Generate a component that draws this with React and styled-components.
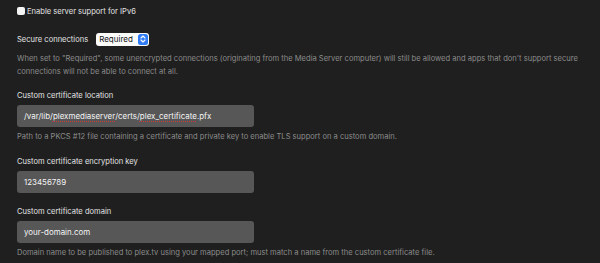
import React from "react";
import styled, { createGlobalStyle } from "styled-components";

const GlobalStyle = createGlobalStyle`
  html, body {
    margin: 0;
    padding: 0;
    background: #1f1f1f;
  }
  body {
    font-family: Inter, "Noto Sans", "Liberation Sans", sans-serif;
    -webkit-font-smoothing: antialiased;
  }
`;

const Page = styled.div`
  width: 600px;
  height: 263px;
  box-sizing: border-box;
  padding: 4px 17px 0;
  background: #1f1f1f;
  overflow: hidden;
`;

const CheckRow = styled.label`
  display: flex;
  align-items: center;
  gap: 2px;
  height: 14px;
  color: #e4e4e4;
  font-size: 7.57px;
`;

const CheckBox = styled.span`
  width: 8px;
  height: 8px;
  border-radius: 2px;
  background: #f4f4f4;
`;

const SelectRow = styled.div`
  display: flex;
  align-items: center;
  gap: 8px;
  height: 14px;
  margin-top: 14px;
  color: #e4e4e4;
  font-size: 7.57px;
`;

const Select = styled.div`
  display: flex;
  align-items: center;
  justify-content: space-between;
  width: 53px;
  height: 13px;
  box-sizing: border-box;
  padding: 0 1px 0 3px;
  border-radius: 3px;
  background: #fbfbfb;
  color: #111;
  font-size: 8px;
`;

const Stepper = styled.span`
  display: flex;
  align-items: center;
  justify-content: center;
  width: 10px;
  height: 11px;
  border-radius: 2.5px;
  background: #2f7cf6;
`;

const Description = styled.p`
  margin: ${(p) => p.$top || 3}px 0 0;
  color: #8b8b8b;
  font-size: 7.57px;
  line-height: 13px;
  white-space: nowrap;
`;

const Fields = styled.div`
  display: flex;
  flex-direction: column;
  gap: 13px;
  margin-top: 12px;
`;

const Group = styled.div`
  display: flex;
  flex-direction: column;
`;

const Label = styled.div`
  color: #e4e4e4;
  font-size: 7.57px;
  line-height: 12px;
`;

const Field = styled.div`
  display: flex;
  align-items: center;
  width: 237px;
  height: 22px;
  margin-top: 3px;
  box-sizing: border-box;
  padding: 0 7px;
  border-radius: 3px;
  background: #575757;
  color: #f4f4f4;
  font-size: 7.95px;
  white-space: nowrap;
`;

const Misspelled = styled.span`
  text-decoration: underline dotted #d03a3a;
  text-decoration-thickness: 1px;
  text-underline-offset: 2px;
`;

function StepperIcon() {
  return (
    <svg width="6" height="8" viewBox="0 0 6 8" fill="none">
      <path d="M1 3 L3 1 L5 3" stroke="#fff" strokeWidth="1.1" strokeLinecap="round" strokeLinejoin="round" />
      <path d="M1 5 L3 7 L5 5" stroke="#fff" strokeWidth="1.1" strokeLinecap="round" strokeLinejoin="round" />
    </svg>
  );
}

export default function App() {
  return (
    <>
      <GlobalStyle />
      <Page>
        <CheckRow>
          <CheckBox />
          Enable server support for IPv6
        </CheckRow>

        <SelectRow>
          Secure connections
          <Select>
            Required
            <Stepper>
              <StepperIcon />
            </Stepper>
          </Select>
        </SelectRow>
        <Description $top={5.5}>
          When set to "Required", some unencrypted connections (originating from the Media Server computer) will still be allowed and apps that don't support secure
          <br />
          connections will not be able to connect at all.
        </Description>

        <Fields>
          <Group>
            <Label>Custom certificate location</Label>
            <Field>
              /var/lib/<Misspelled>plexmediaserver</Misspelled>/certs/<Misspelled>plex_certificate</Misspelled>.pfx
            </Field>
            <Description>
              Path to a PKCS #12 file containing a certificate and private key to enable TLS support on a custom domain.
            </Description>
          </Group>

          <Group>
            <Label>Custom certificate encryption key</Label>
            <Field>123456789</Field>
          </Group>

          <Group>
            <Label>Custom certificate domain</Label>
            <Field>your-domain.com</Field>
            <Description>
              Domain name to be published to plex.tv using your mapped port; must match a name from the custom certificate file.
            </Description>
          </Group>
        </Fields>
      </Page>
    </>
  );
}
